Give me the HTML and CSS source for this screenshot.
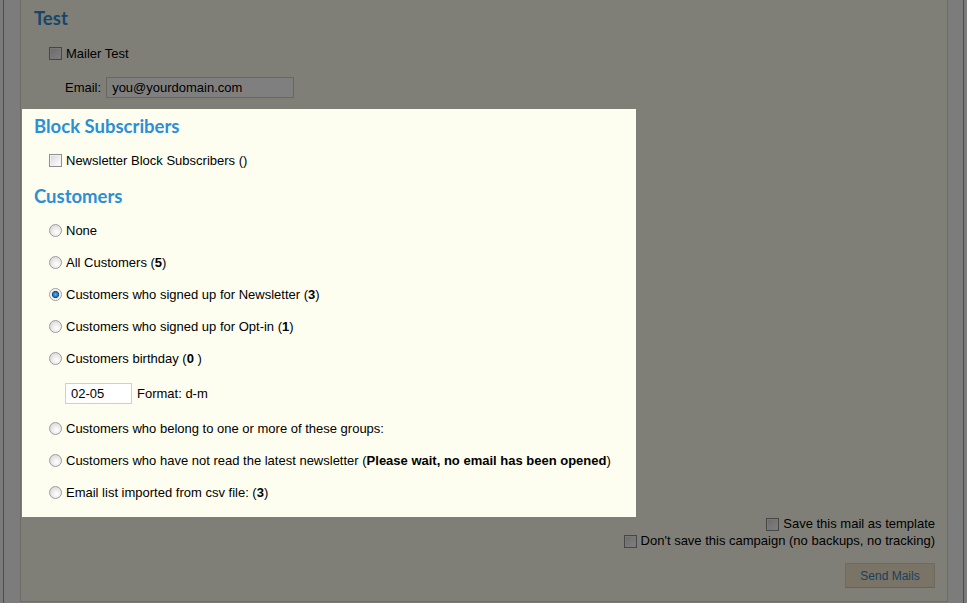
FILE: index.html
```html
<!DOCTYPE html>
<html lang="en">
<head>
<meta charset="utf-8">
<title>Newsletter</title>
<link rel="stylesheet" href="styles.css">
</head>
<body>
<div class="shell">
  <div class="rail rail-left"></div>
  <main class="page">
    <section class="block block-test">
      <h2 class="block-title title-test">Test</h2>
      <label class="opt row-34"><input type="checkbox" class="cb"><span>Mailer Test</span></label>
      <div class="field-row row-34">
        <span class="field-label">Email:</span>
        <input class="text-input email-input" type="text" value="you@yourdomain.com">
      </div>
    </section>

    <section class="block highlight">
      <h2 class="block-title title-block">Block Subscribers</h2>
      <label class="opt row-34"><input type="checkbox" class="cb"><span>Newsletter Block Subscribers ()</span></label>
      <h2 class="block-title title-customers">Customers</h2>
      <div class="radio-list">
        <label class="opt row-32"><input type="radio" name="to" class="rb"><span>None</span></label>
        <label class="opt row-32"><input type="radio" name="to" class="rb"><span>All Customers (<b>5</b>)</span></label>
        <label class="opt row-32"><input type="radio" name="to" class="rb" checked><span>Customers who signed up for Newsletter (<b>3</b>)</span></label>
        <label class="opt row-32"><input type="radio" name="to" class="rb"><span>Customers who signed up for Opt-in (<b>1</b>)</span></label>
        <label class="opt row-32"><input type="radio" name="to" class="rb"><span>Customers birthday (<b>0</b> )</span></label>
        <div class="date-row">
          <input class="text-input date-input" type="text" value="02-05">
          <span class="date-format">Format: d-m</span>
        </div>
        <label class="opt row-32"><input type="radio" name="to" class="rb"><span>Customers who belong to one or more of these groups:</span></label>
        <label class="opt row-32"><input type="radio" name="to" class="rb"><span>Customers who have not read the latest newsletter (<b>Please wait, no email has been opened</b>)</span></label>
        <label class="opt row-32"><input type="radio" name="to" class="rb"><span>Email list imported from csv file: (<b>3</b>)</span></label>
      </div>
    </section>

    <div class="footer-opts">
      <label class="foot-opt"><input type="checkbox" class="cb"><span>Save this mail as template</span></label>
      <label class="foot-opt"><input type="checkbox" class="cb"><span>Don't save this campaign (no backups, no tracking)</span></label>
      <div class="actions"><button class="btn-send" type="button">Send Mails</button></div>
    </div>
  </main>
  <div class="rail rail-right"></div>
</div>
<div class="overlay"></div>
</body>
</html>
```

FILE: styles.css
```css
* { box-sizing: border-box; }

html, body {
  margin: 0;
  padding: 0;
}

body {
  background: #f6f6f6;
  font-family: "Liberation Sans", Arial, sans-serif;
  font-size: 13px;
  color: #000;
  height: 603px;
  overflow: hidden;
}

.shell {
  display: flex;
  padding: 0 3px;
  height: 603px;
}

.rail {
  background: #f8f8f8;
  flex: none;
}

.rail-left {
  width: 17px;
  border-left: 1px solid #9a9a9a;
}

.rail-right {
  width: 16px;
  border-right: 1px solid #9a9a9a;
}

.page {
  flex: 1;
  height: 602px;
  background: #fefef0;
  border-left: 1px solid #dcdbd0;
  border-right: 1px solid #dcdbd0;
  border-bottom: 1px solid #dcdbd0;
  padding: 0 12px 0 1px;
  display: flex;
  flex-direction: column;
}

.block {
  padding-left: 12px;
}

.block-test {
  padding-bottom: 5px;
}

.block-title {
  margin: 0;
  font-family: Lato, "Open Sans", sans-serif;
  font-weight: 700;
  font-size: 18.5px;
  color: #2b8fd4;
  display: flex;
  align-items: center;
}

.title-test { height: 36px; }
.title-block { height: 34px; }
.title-customers { height: 37px; }

.opt {
  display: flex;
  align-items: center;
  padding-left: 15px;
}

.row-34 { height: 34px; }
.row-32 { height: 32px; }

.field-row {
  display: flex;
  align-items: center;
  padding-left: 31px;
}

.field-label {
  margin-right: 5px;
}

.text-input {
  font-family: "Liberation Sans", Arial, sans-serif;
  font-size: 13px;
  color: #000;
  background: #fff;
  border: 1px solid #dccfae;
  height: 21px;
  padding: 0 5px;
  margin: 0;
  outline: none;
}

.email-input {
  width: 188px;
  border-color: #d8cfb6;
}

.highlight {
  position: relative;
  z-index: 20;
  width: 614px;
  background: #fefef0;
  padding-bottom: 9px;
}

.date-row {
  height: 38px;
  display: flex;
  align-items: center;
  padding-left: 31px;
}

.date-input {
  width: 67px;
}

.date-format {
  margin-left: 5px;
}

.cb {
  appearance: none;
  -webkit-appearance: none;
  width: 13px;
  height: 13px;
  margin: 0 4px 0 0;
  flex: none;
  border: 1px solid #8e8f8f;
  background: linear-gradient(135deg, #d2d2d2 0%, #eaeaea 45%, #ffffff 100%);
  box-shadow: inset 0 0 0 1px #f2f2f2;
}

.rb {
  appearance: none;
  -webkit-appearance: none;
  width: 13px;
  height: 13px;
  margin: 0 4px 0 0;
  flex: none;
  border-radius: 50%;
  border: 1px solid #9c9c9c;
  background: radial-gradient(circle at 60% 65%, #ffffff 0, #f0f0f0 35%, #cfcfcf 100%);
}

.rb:checked {
  background: radial-gradient(circle at 50% 50%, #59b5f0 0, #2a7cc0 2px, #164f86 3.2px, #e8e8e8 4px, #ffffff 5.5px);
}

.footer-opts {
  display: flex;
  flex-direction: column;
  align-items: flex-end;
}

.foot-opt {
  display: flex;
  align-items: flex-start;
  height: 16.5px;
  line-height: 14px;
}

.foot-opt .cb {
  margin-top: 1px;
}

.actions {
  margin-top: 13px;
}

.btn-send {
  width: 90px;
  height: 25px;
  font-family: "Liberation Sans", Arial, sans-serif;
  font-size: 12px;
  color: #3a7fb8;
  background: #f2e8cc;
  border: 1px solid #e0d4b4;
  border-bottom-color: #d2c6a4;
  padding: 0;
}

.overlay {
  position: fixed;
  inset: 0;
  background: rgba(0, 0, 0, 0.5);
  z-index: 10;
}
```
